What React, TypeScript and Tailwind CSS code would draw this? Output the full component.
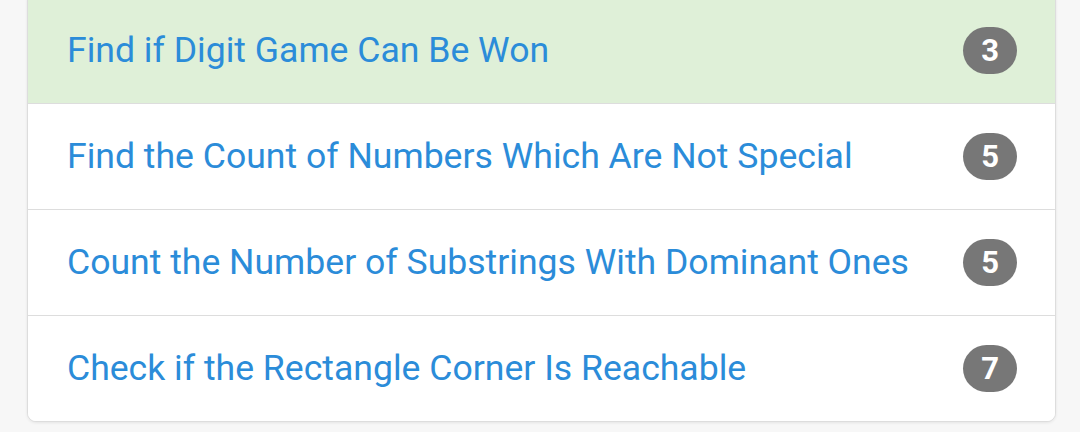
const problems = [
  { title: 'Find if Digit Game Can Be Won', count: 3, solved: true },
  { title: 'Find the Count of Numbers Which Are Not Special', count: 5 },
  { title: 'Count the Number of Substrings With Dominant Ones', count: 5 },
  { title: 'Check if the Rectangle Corner Is Reachable', count: 7 },
];

export default function App() {
  return (
    <div
      className="min-h-screen bg-[#f7f7f7] pl-[27px] pr-[24px] overflow-hidden"
      style={{ fontFamily: 'Roboto, "Liberation Sans", sans-serif' }}
    >
      <div className="-mt-[3px] bg-white border border-[#dddddd] rounded-b-[9px] shadow-[0_1px_3px_rgba(0,0,0,0.08)] overflow-hidden">
        {problems.map((p, i) => (
          <div
            key={p.title}
            className={`flex items-center justify-between pl-[39px] pr-[38px] ${
              i > 0 ? 'h-[106px] border-t border-[#dddddd]' : 'h-[105px]'
            } ${p.solved ? 'bg-[#dff0d8]' : 'bg-white'}`}
          >
            <a className="text-[35.6px] leading-none text-[#2b8cd9]">{p.title}</a>
            <span className="h-[47px] min-w-[53px] px-[18px] rounded-full bg-[#777777] text-white text-[31px] font-bold leading-none flex items-center justify-center">
              {p.count}
            </span>
          </div>
        ))}
      </div>
    </div>
  );
}
